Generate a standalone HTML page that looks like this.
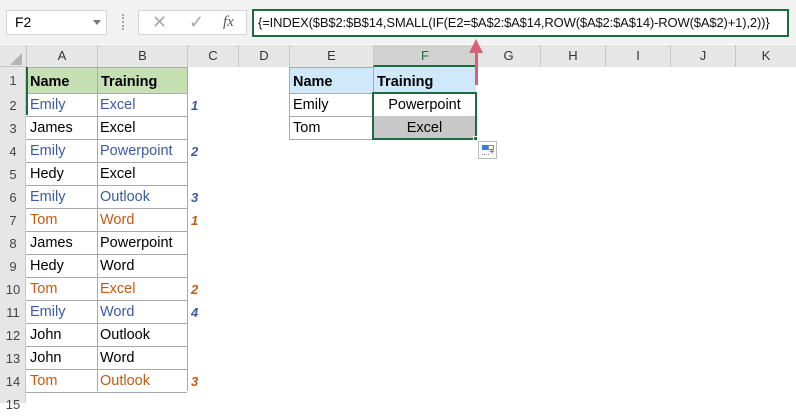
<!DOCTYPE html><html><head><style>
body{margin:0;width:796px;height:403px;background:#fff;position:relative;overflow:hidden;font-family:"Liberation Sans",Arial,sans-serif;}
div{position:absolute;box-sizing:border-box;}
.t{font-size:14.5px;line-height:23px;white-space:nowrap;}
.h{background:#e6e6e6;color:#333;font-size:13px;text-align:center;}
.b{color:#3b5aa5}.o{color:#c55a11}
.n{font-weight:bold;font-style:italic;font-size:13px}
</style></head><body>
<div style="left:0;top:0;width:796px;height:44px;background:#f2f2f2"></div>
<div style="left:6px;top:10px;width:101px;height:25px;background:#fff;border:1px solid #d4d4d4;font-size:14px;line-height:23px;padding-left:8px">F2</div>
<div style="left:93px;top:20px;width:0;height:0;border-left:4px solid transparent;border-right:4px solid transparent;border-top:5px solid #777"></div>
<div style="left:122px;top:14px;width:2px;height:16px;border-left:2px dotted #aaa"></div>
<div style="left:138px;top:10px;width:109px;height:25px;background:#fff;border:1px solid #d4d4d4;color:#aaa;font-size:18px;line-height:22px;overflow:hidden"><span style="position:absolute;left:13px">✕</span><span style="position:absolute;left:50px">✓</span><span style="position:absolute;left:84px;color:#555;font-family:'Liberation Serif';font-style:italic;font-size:15px">fx</span></div>
<div style="left:252px;top:9px;width:537px;height:28px;background:#fff;border:2px solid #1e6b3e;font-size:13px;letter-spacing:-0.15px;line-height:23px;padding-left:4px;white-space:nowrap;overflow:hidden;color:#111">{=INDEX($B$2:$B$14,SMALL(IF(E2=$A$2:$A$14,ROW($A$2:$A$14)-ROW($A$2)+1),2))}</div>
<div style="left:0;top:45px;width:796px;height:22px;background:#e6e6e6;border-bottom:1px solid #c8c8c8"></div>
<div style="left:10px;top:53px;width:0;height:0;border-left:12px solid transparent;border-bottom:12px solid #b4b4b4"></div>
<div class="h t" style="left:26px;top:45px;width:71px;height:22px;line-height:22px;border-left:1px solid #c8c8c8">A</div>
<div class="h t" style="left:97px;top:45px;width:90px;height:22px;line-height:22px;border-left:1px solid #c8c8c8">B</div>
<div class="h t" style="left:187px;top:45px;width:51px;height:22px;line-height:22px;border-left:1px solid #c8c8c8">C</div>
<div class="h t" style="left:238px;top:45px;width:51px;height:22px;line-height:22px;border-left:1px solid #c8c8c8">D</div>
<div class="h t" style="left:289px;top:45px;width:84px;height:22px;line-height:22px;border-left:1px solid #c8c8c8">E</div>
<div class="h t" style="left:373px;top:45px;width:103px;height:22px;line-height:22px;border-left:1px solid #c8c8c8;background:#d2d2d2;color:#1e6b3e;border-bottom:2px solid #1e6b3e">F</div>
<div class="h t" style="left:476px;top:45px;width:64px;height:22px;line-height:22px;border-left:1px solid #c8c8c8">G</div>
<div class="h t" style="left:540px;top:45px;width:65px;height:22px;line-height:22px;border-left:1px solid #c8c8c8">H</div>
<div class="h t" style="left:605px;top:45px;width:65px;height:22px;line-height:22px;border-left:1px solid #c8c8c8">I</div>
<div class="h t" style="left:670px;top:45px;width:65px;height:22px;line-height:22px;border-left:1px solid #c8c8c8">J</div>
<div class="h t" style="left:735px;top:45px;width:61px;height:22px;line-height:22px;border-left:1px solid #c8c8c8">K</div>
<div style="left:0;top:67px;width:26px;height:336px;background:#e6e6e6;border-right:1px solid #c8c8c8"></div>
<div id="rows"></div>
<script>
var data=[["Emily","Excel","b","1","b"],["James","Excel",""],["Emily","Powerpoint","b","2","b"],["Hedy","Excel",""],["Emily","Outlook","b","3","b"],["Tom","Word","o","1","o"],["James","Powerpoint",""],["Hedy","Word",""],["Tom","Excel","o","2","o"],["Emily","Word","b","4","b"],["John","Outlook",""],["John","Word",""],["Tom","Outlook","o","3","o"]];
var h="";
function rt(r){return r==1?67:92.7+(r-2)*23;}
for(var r=1;r<=15;r++){var y=rt(r),hh=r==1?25.7:23;
h+='<div style="left:0;top:'+y+'px;width:26px;height:'+hh+'px;line-height:'+(hh+2)+'px;text-align:center;font-size:13px;color:#444">'+r+'</div>';}
h+='<div style="left:26px;top:67px;width:161px;height:25.7px;background:#c6e0b4"></div>';
h+='<div class="t" style="left:30px;top:71px;font-weight:bold">Name</div><div class="t" style="left:101px;top:71px;font-weight:bold">Training</div>';
for(var i=0;i<13;i++){var d=data[i],y=rt(i+2);
h+='<div class="t '+d[2]+'" style="left:30px;top:'+(y+1)+'px">'+d[0]+'</div><div class="t '+d[2]+'" style="left:100px;top:'+(y+1)+'px">'+d[1]+'</div>';
if(d[3])h+='<div class="t n '+d[4]+'" style="left:191px;top:'+(y+1)+'px">'+d[3]+'</div>';}
for(var r=1;r<=15;r++){var y=rt(r);h+='<div style="left:26px;top:'+y+'px;width:161px;height:1px;background:#aaa"></div>';}
h+='<div style="left:97px;top:67px;width:1px;height:324px;background:#aaa"></div><div style="left:187px;top:67px;width:1px;height:324px;background:#aaa"></div>';
h+='<div style="left:26px;top:67px;width:2px;height:48px;background:#1e6b3e"></div>';
h+='<div style="left:289px;top:67px;width:187px;height:25.7px;background:#cfe9fb"></div>';
h+='<div class="t" style="left:293px;top:71px;font-weight:bold">Name</div><div class="t" style="left:377px;top:71px;font-weight:bold">Training</div>';
h+='<div style="left:373px;top:115.7px;width:103px;height:23px;background:#c8c8c8"></div>';
h+='<div class="t" style="left:293px;top:93.7px">Emily</div><div class="t" style="left:293px;top:116.7px">Tom</div>';
h+='<div class="t" style="left:373px;top:93.7px;width:103px;text-align:center">Powerpoint</div><div class="t" style="left:373px;top:116.7px;width:103px;text-align:center">Excel</div>';
[67,92.7,115.7,138.7].forEach(function(y){h+='<div style="left:289px;top:'+y+'px;width:84px;height:1px;background:#aaa"></div>';});
h+='<div style="left:289px;top:67px;width:1px;height:72px;background:#aaa"></div><div style="left:373px;top:67px;width:1px;height:72px;background:#aaa"></div>';
h+='<div style="left:372px;top:92px;width:105px;height:48px;border:2px solid #1e6b3e"></div>';
h+='<div style="left:473px;top:136px;width:5px;height:5px;background:#1e6b3e;border:1px solid #fff"></div>';
h+='<div style="left:478px;top:141px;width:19px;height:18px;border:1px solid #bbb;background:#fff"><div style="left:3px;top:3px;width:6px;height:5px;background:#3a7fd6"></div><div style="left:9px;top:3px;width:6px;height:5px;border:1px solid #888"></div><div style="left:3px;top:9px;width:7px;height:4px;border-bottom:1px dotted #888"></div><div style="left:10px;top:5px;font-size:10px;color:#555">+</div></div>';
h+='<div style="left:475px;top:48px;width:3px;height:37px;background:#d9607a"></div><div style="left:469px;top:39px;width:0;height:0;border-left:7.5px solid transparent;border-right:7.5px solid transparent;border-bottom:14px solid #d9607a"></div>';
document.getElementById("rows").outerHTML=h;
</script>
</body></html>
